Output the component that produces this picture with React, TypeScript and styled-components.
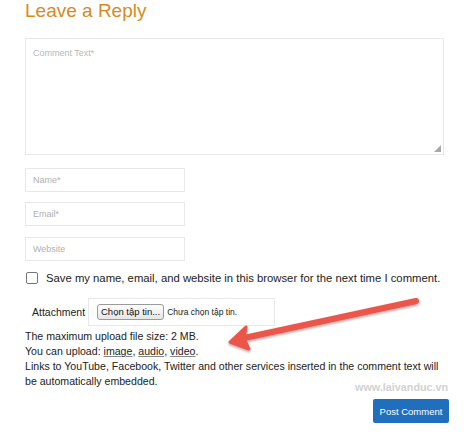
import React, { FC } from "react";
import styled, { createGlobalStyle } from "styled-components";

const GlobalStyle = createGlobalStyle`
  html, body {
    margin: 0;
    padding: 0;
    background: #fff;
  }
  body {
    font-family: "Liberation Sans", Arial, Helvetica, sans-serif;
    color: #222;
  }
`;

const Page = styled.div`
  position: relative;
  width: 474px;
  height: 438px;
  overflow: hidden;
  padding: 0 25px 0 25px;
  box-sizing: border-box;
  display: flex;
  flex-direction: column;
`;

const Title = styled.h3`
  margin: 0;
  font-size: 19px;
  line-height: 22px;
  font-weight: normal;
  color: #d68a1f;
`;

const CommentBox = styled.div`
  margin-top: 16px;
  width: 419px;
  height: 117px;
  box-sizing: border-box;
  border: 1px solid #e8e8e8;
  position: relative;
  padding: 9px 7px;
  font-size: 9px;
  color: #b8b8b8;
`;

const Grip = styled.svg`
  position: absolute;
  right: 1px;
  bottom: 1px;
`;

const Field = styled.div<{ $top: number }>`
  margin-top: ${(p) => p.$top}px;
  width: 160px;
  height: 24px;
  box-sizing: border-box;
  border: 1px solid #e8e8e8;
  display: flex;
  align-items: center;
  padding: 0 7px;
  font-size: 9px;
  color: #b0b0b0;
`;

const CheckRow = styled.label`
  margin-top: 10px;
  display: flex;
  align-items: center;
  gap: 8px;
  font-size: 11.3px;
  line-height: 14px;
  color: #222;
  white-space: nowrap;
`;

const Box = styled.span`
  width: 10px;
  height: 10px;
  margin-left: 1px;
  border: 1px solid #777;
  border-radius: 2px;
  background: #fff;
  flex-shrink: 0;
`;

const AttachRow = styled.div`
  margin-top: 13px;
  display: flex;
  align-items: center;
`;

const AttachLabel = styled.span`
  width: 63px;
  padding-left: 7px;
  box-sizing: border-box;
  font-size: 10.5px;
  color: #222;
`;

const FileWrap = styled.div`
  width: 187px;
  height: 28px;
  box-sizing: border-box;
  border: 1px solid #e8e8e8;
  display: flex;
  align-items: center;
  padding-left: 8px;
  gap: 3px;
`;

const FileButton = styled.span`
  height: 14px;
  padding: 0 3px;
  border: 1px solid #9a9a9a;
  border-radius: 3px;
  background: linear-gradient(#fdfdfd, #e6e6e6);
  font-size: 9.5px;
  line-height: 14px;
  color: #111;
  white-space: nowrap;
`;

const FileNote = styled.span`
  font-size: 8.5px;
  color: #222;
  white-space: nowrap;
`;

const Info = styled.div`
  margin-top: 3px;
  display: flex;
  flex-direction: column;
  align-items: flex-start;
`;

const Line = styled.div`
  font-size: 10.6px;
  line-height: 15px;
  color: #222;
  white-space: nowrap;
`;

const Kind = styled.span`
  text-decoration: underline;
  text-decoration-color: #888;
  text-underline-offset: 1px;
`;

const Footer = styled.div`
  display: flex;
  justify-content: flex-end;
  margin-top: 10px;
`;

const Watermark = styled.div`
  position: absolute;
  left: 355px;
  top: 380px;
  font-size: 10.8px;
  font-weight: bold;
  letter-spacing: 0;
  color: #d2d2d2;
  line-height: 14px;
  pointer-events: none;
`;

const PostButton = styled.button`
  width: 76px;
  height: 24px;
  border: none;
  border-radius: 2px;
  background: #1f6fbd;
  color: #fff;
  font-family: inherit;
  font-size: 9.5px;
  padding: 0;
`;

const Arrow = styled.svg`
  position: absolute;
  left: 0;
  top: 0;
  pointer-events: none;
`;

const App: FC = () => {
  return (
    <>
      <GlobalStyle />
      <Page>
        <Title>Leave a Reply</Title>
        <CommentBox>
          Comment Text*
          <Grip width="9" height="9" viewBox="0 0 9 9">
            <path d="M8 1 L8 8 L1 8 Z" fill="#a8a8a8" />
          </Grip>
        </CommentBox>
        <Field $top={13}>Name*</Field>
        <Field $top={10}>Email*</Field>
        <Field $top={11}>Website</Field>
        <CheckRow>
          <Box />
          Save my name, email, and website in this browser for the next time I comment.
        </CheckRow>
        <AttachRow>
          <AttachLabel>Attachment</AttachLabel>
          <FileWrap>
            <FileButton>Chọn tập tin...</FileButton>
            <FileNote>Chưa chọn tập tin.</FileNote>
          </FileWrap>
        </AttachRow>
        <Info>
          <Line>The maximum upload file size: 2 MB.</Line>
          <Line>
            You can upload: <Kind>image</Kind>, <Kind>audio</Kind>, <Kind>video</Kind>.
          </Line>
          <Line>Links to YouTube, Facebook, Twitter and other services inserted in the comment text will</Line>
          <Line>be automatically embedded.</Line>
        </Info>
        <Footer>
          <PostButton>Post Comment</PostButton>
        </Footer>
        <Watermark>www.laivanduc.vn</Watermark>
        <Arrow width="474" height="438" viewBox="0 0 474 438">
          <defs>
            <filter id="sh" x="-10%" y="-50%" width="120%" height="200%">
              <feDropShadow dx="0" dy="1.5" stdDeviation="1.2" floodColor="#7a1d12" floodOpacity="0.45" />
            </filter>
          </defs>
          <g filter="url(#sh)" fill="#ec5448" stroke="#ec5448">
            <line x1="416" y1="301" x2="244" y2="338" strokeWidth="6" strokeLinecap="round" />
            <path d="M230 342 L246 327 L244 338 L249 349 Z" strokeWidth="3" strokeLinejoin="round" />
          </g>
        </Arrow>
      </Page>
    </>
  );
};

export default App;
